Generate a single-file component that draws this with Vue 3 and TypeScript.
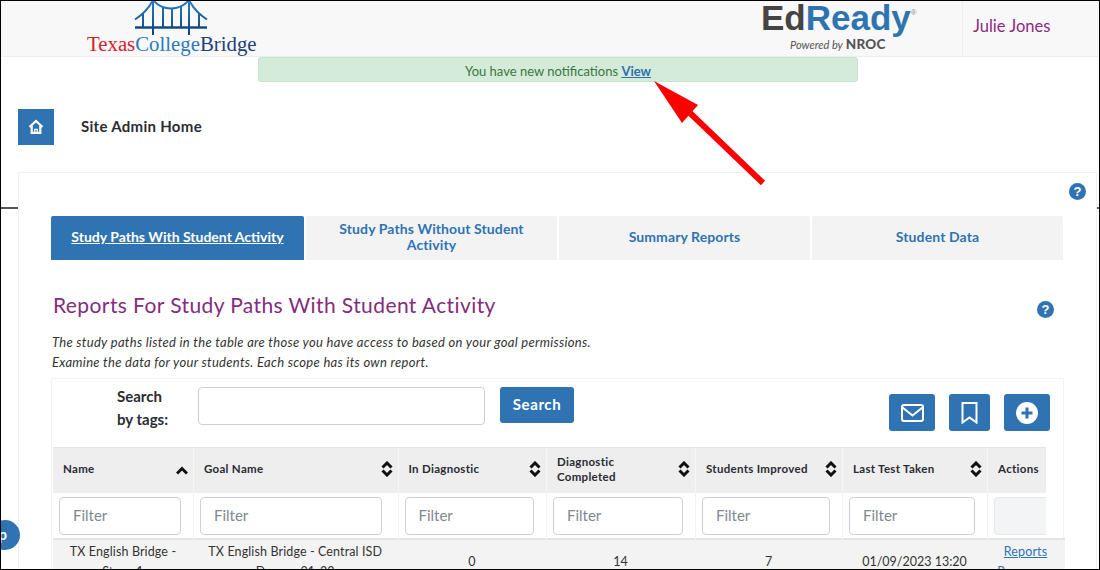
<script setup lang="ts">
interface Col { label: string; width: number; sort: 'up' | 'both' | 'none'; filter: boolean }
const cols: Col[] = [
  { label: 'Name', width: 140, sort: 'up', filter: true },
  { label: 'Goal Name', width: 204.5, sort: 'both', filter: true },
  { label: 'In Diagnostic', width: 148.5, sort: 'both', filter: true },
  { label: 'Diagnostic Completed', width: 149, sort: 'both', filter: true },
  { label: 'Students Improved', width: 147, sort: 'both', filter: true },
  { label: 'Last Test Taken', width: 145, sort: 'both', filter: true },
  { label: 'Actions', width: 59, sort: 'none', filter: false },
]
const tabs = ['Study Paths With Student Activity', 'Study Paths Without Student Activity', 'Summary Reports', 'Student Data']
const gridCols = cols.map((c) => c.width + 'px').join(' ')
const dataCols = cols.map((c, i) => (i === cols.length - 1 ? 77 : c.width) + 'px').join(' ')
</script>

<template>
  <div class="frame">
    <div class="rule"></div>
    <header class="top">
      <div class="tcb">
        <svg class="bridge" width="73" height="35" viewBox="0 0 73 35" fill="none">
          <defs>
            <linearGradient id="steel" gradientUnits="userSpaceOnUse" x1="0" y1="0" x2="0" y2="35">
              <stop offset="0" stop-color="#2a7cc0" />
              <stop offset="1" stop-color="#0f3f7c" />
            </linearGradient>
          </defs>
          <g stroke="url(#steel)" stroke-width="2">
            <path d="M0 18.500C7 14 14 7 18 -1" />
            <path d="M18 -1C24 6 30 7.500 36 7.500C42 7.500 48 6 54 -1" />
            <path d="M54 -1C58 7 65 14 72 18.500" />
            <path d="M18 -1V34M54 -1V34M8 12V26M28 6V26M37 7V26M46 6V26M64 12V26" />
          </g>
          <path d="M0 26.500H72" stroke="#134a88" stroke-width="2.500" />
        </svg>
        <div class="tcb-name"><span class="r">Texas</span><span class="b">College</span><span class="n">Bridge</span></div>
      </div>
      <div class="edready">
        <div class="ed-word"><span class="ed">Ed</span><span class="rd">Ready</span><sup>®</sup></div>
        <div class="ed-sub"><em>Powered by</em> <strong>NROC</strong></div>
      </div>
      <div class="user">Julie Jones</div>
    </header>

    <div class="notice">You have new notifications <a>View</a></div>

    <div class="crumb">
      <div class="home">
        <svg width="16" height="16" viewBox="0 0 16 16" fill="none" stroke="#fff" stroke-width="2.200">
          <path d="M1.500 8 8 2l6.500 6" />
          <path d="M3.700 7v6.800h8.600V7" />
          <path d="M6.800 14v-3.600h2.400V14" stroke-width="1.200" />
        </svg>
      </div>
      <h1>Site Admin Home</h1>
    </div>

    <main class="card">
      <div class="help-row"><span class="help">?</span></div>
      <nav class="tabs">
        <div v-for="(t, i) in tabs" :key="t" class="tab" :class="{ on: i === 0 }">{{ t }}</div>
      </nav>
      <div class="title-row">
        <h2>Reports For Study Paths With Student Activity</h2>
        <span class="help">?</span>
      </div>
      <p class="intro">The study paths listed in the table are those you have access to based on your goal permissions.<br />Examine the data for your students. Each scope has its own report.</p>

      <section class="panel">
        <div class="search">
          <label>Search<br />by tags:</label>
          <div class="tag-input"></div>
          <button class="go">Search</button>
          <div class="tools">
            <button class="tool mail">
              <svg width="23" height="18" viewBox="0 0 23 18" fill="none" stroke="#fff" stroke-width="2"><rect x="1" y="1" width="21" height="16" rx="2" /><path d="m1.500 3.500 10 8 10-8" /></svg>
            </button>
            <button class="tool mark">
              <svg width="17" height="22" viewBox="0 0 17 22" fill="none" stroke="#fff" stroke-width="2"><path d="M1.500 1h14v19.500l-7-5-7 5z" /></svg>
            </button>
            <button class="tool plus">
              <svg width="22" height="22" viewBox="0 0 22 22"><circle cx="11" cy="11" r="11" fill="#fff" /><path d="M11 5.500v11M5.500 11h11" stroke="#2f73b3" stroke-width="3" /></svg>
            </button>
          </div>
        </div>

        <div class="table">
          <div class="row head" :style="{ gridTemplateColumns: gridCols }">
            <div v-for="c in cols" :key="c.label" class="th">
              <span>{{ c.label }}</span>
              <svg v-if="c.sort !== 'none'" class="sort" width="12" height="16" viewBox="0 0 12 16" fill="none" stroke="#111" stroke-width="3">
                <path v-if="c.sort === 'up'" d="m1 12.500 5-5 5 5" />
                <template v-else>
                  <path d="m1.500 6.500 4.500-4.500 4.500 4.500" />
                  <path d="m1.500 9.500 4.500 4.500 4.500-4.500" />
                </template>
              </svg>
            </div>
          </div>
          <div class="row filters" :style="{ gridTemplateColumns: gridCols }">
            <div v-for="c in cols" :key="c.label" class="fc">
              <div class="filter" :class="{ off: !c.filter }">{{ c.filter ? 'Filter' : '' }}</div>
            </div>
          </div>
          <div class="row data" :style="{ gridTemplateColumns: dataCols }">
            <div class="td">TX English Bridge - Stage 1</div>
            <div class="td">TX English Bridge - Central ISD Dragon 21-22</div>
            <div class="td one">0</div>
            <div class="td one">14</div>
            <div class="td one">7</div>
            <div class="td one">01/09/2023 13:20</div>
            <div class="td act"><a>Reports</a><a>Resources</a></div>
          </div>
        </div>
      </section>
    </main>

    <div class="side"><span>p</span></div>
    <svg class="arrow" width="120" height="110" viewBox="0 0 120 110">
      <path d="M109 102 36 32" stroke="#f00" stroke-width="6" />
      <path d="M0 0 44 24 28 42z" fill="#f00" />
    </svg>
  </div>
</template>

<style>
html, body { margin: 0; background: #fff; }
</style>

<style scoped>
.frame {
  position: relative;
  width: 1100px;
  height: 570px;
  box-sizing: border-box;
  border: 1px solid #000;
  overflow: hidden;
  background: #fff;
  font-family: Lato, "Open Sans", sans-serif;
  color: #333;
}
.rule { position: absolute; left: 0; right: 0; top: 206px; height: 2px; background: #555; }
.top {
  display: flex;
  height: 55px;
  background: #f8f8f8;
  border-bottom: 1px solid #eee;
}
.tcb { width: 256px; margin-left: 86px; position: relative; }
.bridge { position: absolute; left: 48px; top: 0; overflow: visible; }
.tcb-name {
  position: absolute;
  left: 0;
  top: 31px;
  font-family: "Liberation Serif", serif;
  font-size: 20.800px;
  line-height: 24px;
}
.r { color: #d5202e; }
.b { color: #2c7ab8; }
.n { color: #1f4176; }
.edready { margin-left: 418px; width: 201px; }
.ed-word {
  font-family: "Liberation Sans", sans-serif;
  font-weight: 700;
  font-size: 35px;
  line-height: 34px;
  white-space: nowrap;
}
.ed-word sup { font-size: 8px; font-weight: 400; color: #888; vertical-align: 15px; line-height: 0; }
.ed { color: #444; }
.rd { color: #2e75b0; }
.ed-sub { margin: 2px 0 0 29px; font-size: 11px; color: #555; line-height: 14px; }
.ed-sub strong { font-size: 13.500px; font-weight: 900; letter-spacing: .3px; }
.user {
  padding-left: 10px;
  border-left: 1px solid #eee;
  flex: 1;
  font-size: 16.500px;
  line-height: 50px;
  color: #8b2a83;
}
.notice {
  box-sizing: border-box;
  width: 600px;
  height: 25px;
  margin: 0 0 0 257px;
  background: #d4ebda;
  border: 1px solid #c5e3cd;
  border-radius: 3px;
  font-size: 13px;
  line-height: 26px;
  text-align: center;
  color: #3c763d;
}
.notice a { color: #2f6fb0; font-weight: 700; text-decoration: underline; }
.crumb { display: flex; align-items: center; margin: 27px 0 0 17px; height: 36px; }
.home { width: 36px; height: 36px; background: #2f73b3; display: flex; align-items: center; justify-content: center; }
.crumb h1 { margin: 0 0 2px 27px; font-size: 15px; font-weight: 700; color: #2b2b33; letter-spacing: .3px; line-height: 34px; }
.card {
  position: relative;
  box-sizing: border-box;
  margin: 27px 0 0 17px;
  width: 1079px;
  height: 400px;
  background: #fff;
  border: 1px solid #f1f1f1;
  padding: 0 0 0 32px;
}
.help-row { display: flex; justify-content: flex-end; padding: 10px 10px 0 0; height: 33px; box-sizing: border-box; }
.help {
  width: 17px;
  height: 17px;
  border-radius: 50%;
  background: #2f73b3;
  color: #fff;
  font: 700 13px/17px "Liberation Sans", sans-serif;
  text-align: center;
}
.tabs { display: flex; gap: 2px; width: 1012px; margin-top: 10px; }
.tab {
  flex: 1;
  height: 44px;
  box-sizing: border-box;
  padding: 0 14px 2px;
  display: flex;
  align-items: center;
  justify-content: center;
  text-align: center;
  background: #f3f3f3;
  border-radius: 2px 2px 0 0;
  color: #2f73b3;
  font-size: 14px;
  font-weight: 700;
  line-height: 16px;
  letter-spacing: .1px;
}
.tab.on { flex: none; width: 253px; background: #2f73b3; color: #fff; text-decoration: underline; letter-spacing: 0; }
.title-row { display: flex; justify-content: space-between; align-items: flex-start; width: 1001px; margin: 32px 0 0 2px; height: 26px; }
.title-row h2 { margin: 0; font-size: 21px; font-weight: 400; color: #842c7e; letter-spacing: .4px; line-height: 26px; }
.title-row .help { margin-top: 8.500px; }
.intro { margin: 14px 0 0 1px; font-size: 13px; font-style: italic; line-height: 20px; letter-spacing: .3px; color: #333; }
.panel { margin-top: 6px; width: 1013px; border: 1px solid #f3f3f3; box-sizing: border-box; height: 200px; }
.search { display: flex; height: 68px; position: relative; }
.search label { margin: 6px 0 0 65px; width: 81px; font-size: 15px; font-weight: 700; line-height: 23px; color: #2b2b33; }
.tag-input { box-sizing: border-box; width: 287px; height: 38px; margin-top: 8px; border: 1px solid #ccd0d6; border-radius: 4px; }
.go {
  margin: 8px 0 0 15px;
  width: 74px;
  height: 36px;
  padding: 0 0 2px;
  border: 0;
  border-radius: 3px;
  background: #2f73b3;
  color: #fff;
  font: 700 15px Lato, sans-serif;
  letter-spacing: .6px;
}
.tools { display: flex; gap: 14px; margin: 15px 0 0 auto; padding-right: 13px; }
.tool { height: 37px; border: 0; border-radius: 3px; background: #2f73b3; padding: 0; display: flex; align-items: center; justify-content: center; }
.mail { width: 46px; }
.mark { width: 41px; }
.plus { width: 46px; }
.table { margin-left: 1px; }
.row { display: grid; }
.head { width: 993px; overflow: hidden; height: 46px; background: #eeeeee; border-top: 1px solid #e4e4e4; box-sizing: border-box; }
.th {
  display: flex;
  align-items: center;
  justify-content: space-between;
  padding: 0 5px 4px 10px;
  border-left: 1px solid #f7f7f7;
  font-size: 11.500px;
  font-weight: 700;
  line-height: 15px;
  color: #2b2b33;
  letter-spacing: .3px;
  min-width: 0;
}
.th:first-child { border-left: 0; }
.th span { max-width: 96px; }
.th:nth-child(5) span, .th:nth-child(6) span { max-width: none; }
.filters { width: 993px; overflow: hidden; height: 47px; box-sizing: border-box; }
.fc { padding: 4px 12px 0 6px; border-left: 1px solid #f3f3f3; min-width: 0; }
.fc:first-child { border-left: 0; }
.fc:nth-child(2) { padding-right: 16px; }
.fc:last-child { padding-right: 0; }
.filter {
  box-sizing: border-box;
  height: 38px;
  border: 1px solid #ccd0d6;
  border-radius: 4px;
  padding-left: 13px;
  font-size: 15px;
  line-height: 34px;
  color: #808890;
}
.filter.off { background: #f3f4f5; border-color: #e6e8ea; width: 80px; }
.data { height: 60px; background: #f3f3f3; width: 1012px; border-top: 2px solid #e4e4e4; box-sizing: border-box; margin-top: -2px; }
.td { text-align: center; font-size: 12.500px; letter-spacing: .12px; line-height: 20px; padding: 2px 10px; color: #333; min-width: 0; }
.td.one { padding-top: 12px; letter-spacing: 0; }
.act { padding: 2px 0 0; white-space: nowrap; }
.act a { display: block; color: #2f73b3; text-decoration: underline; }
.side {
  position: absolute;
  left: -11px;
  top: 519px;
  width: 30px;
  height: 30px;
  border-radius: 50%;
  background: #2f73b3;
  color: #fff;
  font-size: 15px;
  font-weight: 700;
  line-height: 28px;
  text-align: right;
}
.side span { margin-right: 13px; }
.arrow { position: absolute; left: 653px; top: 80px; }
</style>
